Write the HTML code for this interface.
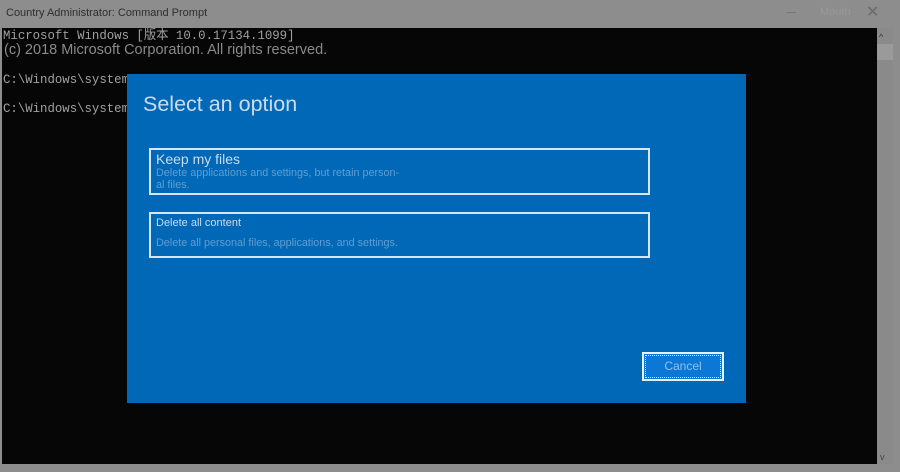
<!DOCTYPE html>
<html><head><style>
body{margin:0;width:900px;height:472px;background:#8d8d8d;position:relative;overflow:hidden;font-family:"Liberation Sans",sans-serif}
.t{position:absolute;left:6px;top:7px;font-size:11px;color:#2e2e2e}
.con{position:absolute;left:2px;top:28px;width:875px;height:436px;background:#060606}
.sb{position:absolute;left:877px;top:28px;width:16px;height:436px;background:#8a8a8a}
.mono{position:absolute;left:3px;font-family:"Liberation Mono","Noto Sans CJK SC",monospace;font-size:13px;line-height:14px;color:#a0a0a0;white-space:pre;transform:scaleX(0.95);transform-origin:left}
.dlg{position:absolute;left:127px;top:74px;width:619px;height:329px;background:#0068b6}
.h{position:absolute;left:16px;top:18px;font-size:21.5px;color:#c9dcee}
.box{position:absolute;left:22px;width:497px;border:2px solid #d6e6f2}
.s{font-size:10.8px;color:#5f9ed2;line-height:12px}
.btn{position:absolute;left:515px;top:278px;width:78px;height:25px;border:2px solid #e6f0f8;background:#0b78d6;outline:1px dotted #cfe3f3;outline-offset:-4px;color:#8fc0ea;font-size:12px;text-align:center;line-height:25px}
</style></head><body>
<div class="t">Country Administrator: Command Prompt</div>
<div style="position:absolute;left:786px;top:12px;width:10px;height:1px;background:#777"></div>
<div style="position:absolute;left:820px;top:6px;font-size:11px;color:#999">Mouth</div>
<div style="position:absolute;left:866px;top:2px;font-size:16px;color:#6a6a6a">✕</div>
<div class="con"></div>
<div class="sb"><div style="position:absolute;left:2px;top:4px;font-size:9px;color:#333">^</div><div style="position:absolute;left:0;top:16px;width:16px;height:16px;background:#9a9a9a"></div><div style="position:absolute;left:3px;bottom:2px;font-size:9px;color:#444">v</div></div>
<div class="mono" style="top:29px">Microsoft Windows [版本 10.0.17134.1099]</div>
<div style="position:absolute;left:4px;top:42px;font-size:14.5px;color:#8a8a8a">(c) 2018 Microsoft Corporation. All rights reserved.</div>
<div class="mono" style="top:73px">C:\Windows\system</div>
<div class="mono" style="top:102px">C:\Windows\system</div>
<div class="dlg">
<div class="h">Select an option</div>
<div class="box" style="top:74px;height:43px"><div style="margin:1px 0 0 5px;font-size:14px;color:#c9dcee">Keep my files</div><div class="s" style="margin-left:5px">Delete applications and settings, but retain person-<br>al files.</div></div>
<div class="box" style="top:138px;height:42px"><div style="margin:3px 0 0 5px;font-size:11px;color:#c9dcee">Delete all content</div><div class="s" style="margin:8px 0 0 5px">Delete all personal files, applications, and settings.</div></div>
<div class="btn">Cancel</div>
</div>
</body></html>
